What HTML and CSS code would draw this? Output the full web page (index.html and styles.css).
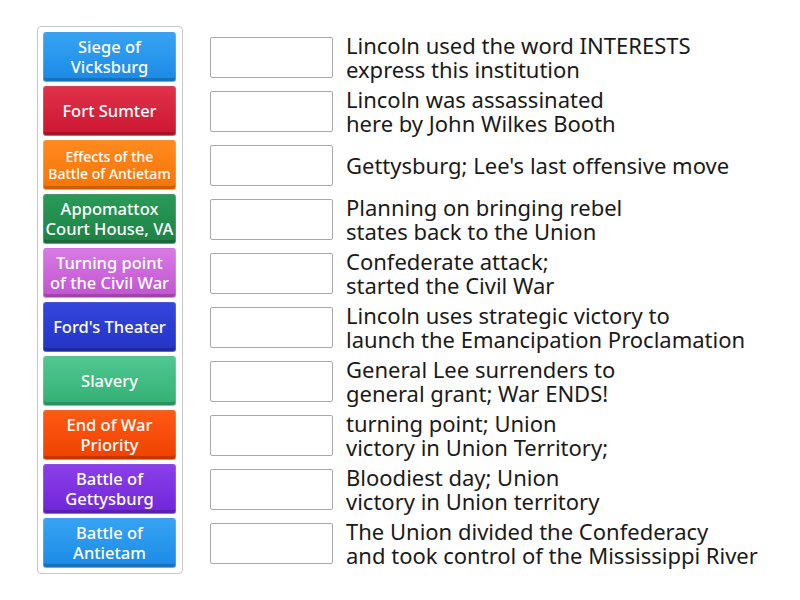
FILE: index.html
```html
<!DOCTYPE html>
<html>
<head>
<meta charset="utf-8">
<link rel="stylesheet" href="styles.css">
</head>
<body>
<div class="page">
  <div class="panel">
    <div class="tile c-blue">Siege of<br>Vicksburg</div>
    <div class="tile c-red">Fort Sumter</div>
    <div class="tile c-orange small">Effects of the<br>Battle of Antietam</div>
    <div class="tile c-green">Appomattox<br>Court House, VA</div>
    <div class="tile c-pink">Turning point<br>of the Civil War</div>
    <div class="tile c-indigo">Ford's Theater</div>
    <div class="tile c-mint">Slavery</div>
    <div class="tile c-orred">End of War<br>Priority</div>
    <div class="tile c-purple">Battle of<br>Gettysburg</div>
    <div class="tile c-blue">Battle of<br>Antietam</div>
  </div>
  <div class="rows">
    <div class="row"><div class="box"></div><div class="clue">Lincoln used the word INTERESTS<br>express this institution</div></div>
    <div class="row"><div class="box"></div><div class="clue">Lincoln was assassinated<br>here by John Wilkes Booth</div></div>
    <div class="row"><div class="box"></div><div class="clue">Gettysburg; Lee's last offensive move</div></div>
    <div class="row"><div class="box"></div><div class="clue">Planning on bringing rebel<br>states back to the Union</div></div>
    <div class="row"><div class="box"></div><div class="clue">Confederate attack;<br>started the Civil War</div></div>
    <div class="row"><div class="box"></div><div class="clue">Lincoln uses strategic victory to<br>launch the Emancipation Proclamation</div></div>
    <div class="row"><div class="box"></div><div class="clue">General Lee surrenders to<br>general grant; War ENDS!</div></div>
    <div class="row"><div class="box"></div><div class="clue">turning point; Union<br>victory in Union Territory;</div></div>
    <div class="row"><div class="box"></div><div class="clue">Bloodiest day; Union<br>victory in Union territory</div></div>
    <div class="row"><div class="box"></div><div class="clue">The Union divided the Confederacy<br>and took control of the Mississippi River</div></div>
  </div>
</div>
</body>
</html>
```
FILE: styles.css
```css
html, body {
  margin: 0;
  padding: 0;
  background: #fff;
}
.page {
  display: flex;
  align-items: flex-start;
  padding: 26px 0 0 37px;
  font-family: "Noto Sans", "Open Sans", sans-serif;
}
.panel {
  display: flex;
  flex-direction: column;
  gap: 4px;
  padding: 5px 6px 5px 5px;
  border: 1px solid #c8c8c8;
  border-radius: 4px;
}
.tile {
  width: 133px;
  height: 50px;
  box-sizing: border-box;
  display: flex;
  align-items: center;
  justify-content: center;
  text-align: center;
  color: #fff;
  font-size: 16.5px;
  line-height: 20px;
  font-weight: 500;
  border-radius: 3px;
  border: 1px solid rgba(255,255,255,0.18);
  box-shadow: inset 0 -3px 0 rgba(0,0,0,0.18);
  white-space: nowrap;
}
.tile.small {
  font-size: 14px;
  line-height: 17px;
}
.c-blue { background: linear-gradient(#36a3f2, #1b8ae6); }
.c-red { background: linear-gradient(#e0324a, #cc1632); }
.c-orange { background: linear-gradient(#ff8a1e, #f77408); }
.c-green { background: linear-gradient(#2a9a58, #1d8244); }
.c-pink { background: linear-gradient(#d77ae3, #c253d2); }
.c-indigo { background: linear-gradient(#3446dc, #2334c6); }
.c-mint { background: linear-gradient(#4fc891, #33b074); }
.c-orred { background: linear-gradient(#ff5a14, #ee4200); }
.c-purple { background: linear-gradient(#8a3fea, #7026d8); }
.rows {
  display: flex;
  flex-direction: column;
  gap: 4px;
  padding-top: 6px;
  margin-left: 27px;
}
.row {
  height: 50px;
  display: flex;
  align-items: center;
}
.box {
  width: 123px;
  height: 41px;
  box-sizing: border-box;
  border: 1px solid #a9a9a9;
  border-radius: 2px;
  background: #fff;
  flex: none;
}
.clue {
  margin-left: 13px;
  font-size: 22px;
  line-height: 24px;
  color: #1a1a1a;
  white-space: nowrap;
}
```
